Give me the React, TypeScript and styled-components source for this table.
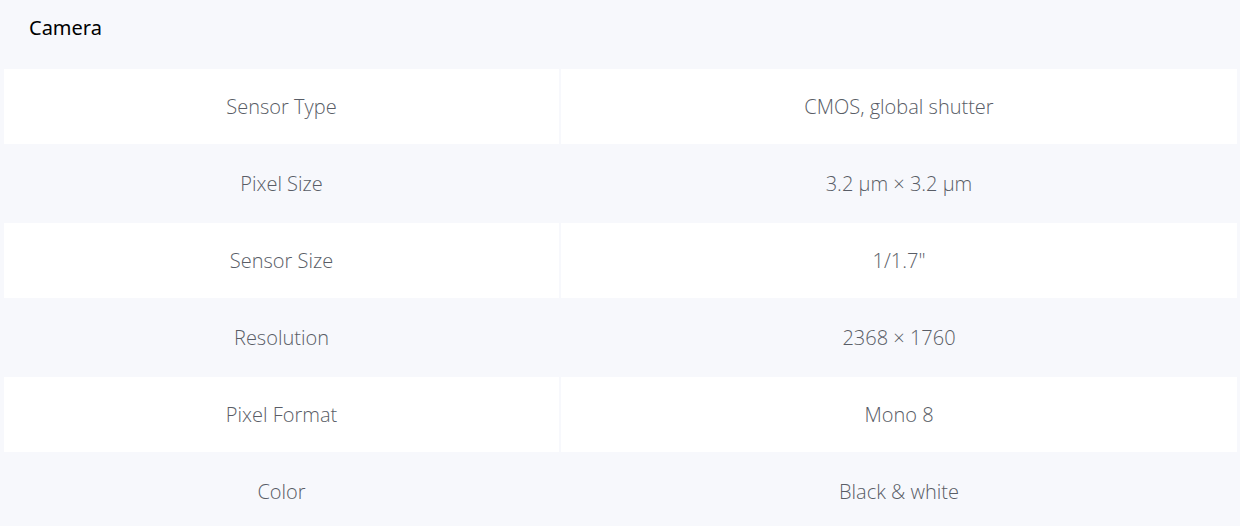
import React from 'react';
import styled, { createGlobalStyle } from 'styled-components';

interface SpecRow {
  label: string;
  value: string;
}

const rows: SpecRow[] = [
  { label: 'Sensor Type', value: 'CMOS, global shutter' },
  { label: 'Pixel Size', value: '3.2 µm × 3.2 µm' },
  { label: 'Sensor Size', value: '1/1.7"' },
  { label: 'Resolution', value: '2368 × 1760' },
  { label: 'Pixel Format', value: 'Mono 8' },
  { label: 'Color', value: 'Black & white' },
];

const GlobalStyle = createGlobalStyle`
  html, body {
    margin: 0;
    padding: 0;
    background: #f7f8fc;
    font-family: "Noto Sans", "Open Sans", sans-serif;
  }
`;

const Page = styled.div`
  padding: 0 1px 0 2px;
`;

const Title = styled.h3`
  margin: 0;
  height: 67px;
  padding: 0 0 12px 27px;
  display: flex;
  align-items: center;
  box-sizing: border-box;
  font-size: 20px;
  font-weight: 400;
  color: #000;
`;

const StyledTable = styled.table`
  width: 100%;
  border-collapse: separate;
  border-spacing: 2px;
  table-layout: fixed;
`;

const TableRow = styled.tr<{ $striped: boolean }>`
  background: ${(p) => (p.$striped ? 'transparent' : '#ffffff')};
`;

const TableCell = styled.td<{ $wide?: boolean }>`
  width: ${(p) => (p.$wide ? 'auto' : '555px')};
  height: 75px;
  padding: 0;
  text-align: center;
  vertical-align: middle;
  font-family: "Open Sans", "Noto Sans", sans-serif;
  font-size: 20px;
  font-weight: 300;
  color: #595d66;
`;

const App: React.FC = () => {
  return (
    <>
      <GlobalStyle />
      <Page>
        <Title>Camera</Title>
        <StyledTable>
          <tbody>
            {rows.map((row, i) => (
              <TableRow key={row.label} $striped={i % 2 === 1}>
                <TableCell>{row.label}</TableCell>
                <TableCell $wide>{row.value}</TableCell>
              </TableRow>
            ))}
          </tbody>
        </StyledTable>
      </Page>
    </>
  );
};

export default App;
